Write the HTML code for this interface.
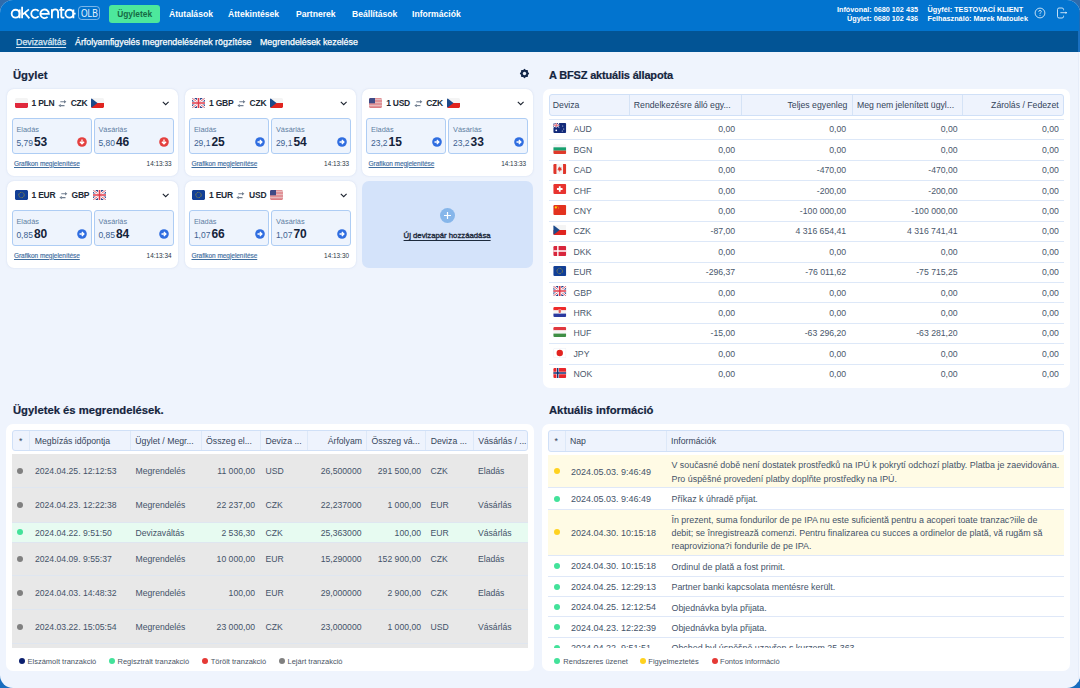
<!DOCTYPE html>
<html><head><meta charset="utf-8">
<style>
*{box-sizing:border-box;margin:0;padding:0}
html,body{width:1080px;height:688px;overflow:hidden;background:linear-gradient(#2f6bab,#1a6ebf 30%,#1a6ebf);font-family:"Liberation Sans",sans-serif;color:#1c2b3f}
#app{position:absolute;left:0;top:0;width:1080px;height:688px;border-radius:13px;overflow:hidden;background:#eff4fd}
.abs{position:absolute}
#top{position:absolute;left:0;top:0;width:1080px;height:31px;background:#0274cf}
#sub{position:absolute;left:0;top:31px;width:1080px;height:21px;background:#025495}
.logo{position:absolute;left:10.5px;top:3.9px;font-size:17px;color:#fff;letter-spacing:.5px;line-height:20px}
.olb{position:absolute;left:78px;top:6.3px;width:22px;height:14px;border:1px solid rgba(220,235,255,.55);border-radius:3.5px}.olb span{position:absolute;left:1.6px;top:0px;font-size:10.6px;color:#eaf3fc;line-height:12px;transform:scaleX(.8);transform-origin:0 0;white-space:nowrap}
.nav{position:absolute;top:9px;font-size:8.6px;font-weight:bold;color:#fff;white-space:nowrap}
.pill{position:absolute;left:109.2px;top:5.2px;width:50.8px;height:17.5px;background:#4de89c;border-radius:3px;color:#166a44;font-size:8.4px;font-weight:bold;text-align:center;line-height:19px}
.hinfo{position:absolute;font-size:7.25px;font-weight:bold;color:#fff;white-space:nowrap;line-height:9.2px}
.subnav{position:absolute;top:36.8px;font-size:8.85px;color:#fff;white-space:nowrap;-webkit-text-stroke:.25px #fff}.subnav u{color:#dfe8f3;-webkit-text-stroke:.25px #dfe8f3;text-decoration-thickness:.6px;text-underline-offset:1.5px}
.title{position:absolute;font-size:11.25px;font-weight:bold;color:#15253e;white-space:nowrap;-webkit-text-stroke:.2px #15253e}
.card{position:absolute;width:171px;height:86.5px;background:#fff;border-radius:7px;box-shadow:0 0 2px rgba(150,170,210,.35)}
svg.flag{position:absolute}
.chd{position:absolute;left:24.6px;top:8.6px;height:11px;font-size:8.5px;font-weight:bold;white-space:nowrap;color:#222a36;line-height:11px;letter-spacing:-.25px}
.chd .swi{display:inline-block;vertical-align:top;margin:2.4px 3.6px 0 3.6px}
.chd .c2{margin-right:4px}.chd .fl2{display:inline-block;vertical-align:top;width:13px;height:10px;margin-top:-.1px;border-radius:1px}
.swap{position:absolute}
.chev{position:absolute;right:8.5px;top:12.2px}
.rb{position:absolute;top:29px;width:80px;height:36px;background:#eef4fd;border:1px solid #aecdf4;border-radius:3px}
.rb .lb{position:absolute;left:3.5px;top:6px;font-size:7.4px;color:#5e7fa3}
.rb .v{position:absolute;left:3.5px;top:16px;white-space:nowrap;color:#14233a;line-height:12px}
.rb .s{font-size:8.5px;color:#3d6190}
.rb .b{font-size:12px;font-weight:bold;margin-left:1px}
.rb .ic{position:absolute;right:3.6px;top:18px}
.gl{position:absolute;left:7px;top:70.6px;font-size:6.5px;color:#3f6e9f;text-decoration:underline;text-decoration-thickness:.5px;text-underline-offset:.7px;white-space:nowrap;-webkit-text-stroke:.15px #3f6e9f;letter-spacing:-.05px}
.ts{position:absolute;right:6.5px;top:71px;font-size:6.4px;color:#2a3646;white-space:nowrap}
.addc{background:#d4e3fa;box-shadow:none}
.addt{position:absolute;left:0;width:171px;top:49.7px;text-align:center;font-size:7.75px;font-weight:normal;-webkit-text-stroke:.35px #1d2a3c;color:#1d2a3c;text-decoration:underline;text-underline-offset:2px;text-decoration-thickness:.8px}
.panel{position:absolute;background:#fff;border-radius:7px}
.th{position:absolute;background:#eef3fd;border:1px solid #d0e0f7;border-radius:3px}
.thc{position:absolute;top:0;height:100%;font-size:8.7px;color:#34445a;white-space:nowrap;padding:0 4.3px;line-height:21px}
.thc.r{text-align:right}
.thc.c{text-align:center}
.br{position:absolute;left:6px;width:515.5px;height:20.4px;border-top:1px solid #dde8f8}
.bc{position:absolute;top:4.7px;font-size:8.7px;color:#4a586c;white-space:nowrap}
.txbody,.ibody{position:absolute;overflow:hidden}.txbody{background:#e8e8e8}
.txr{position:absolute;left:0;width:100%;background:#e8e8e8;border-bottom:1px solid #dfe6f0}
.txr.green{background:#e7fbf1}
.dot{position:absolute;width:6px;height:6px;border-radius:50%}
.tc{position:absolute;font-size:8.65px;color:#445369;white-space:nowrap}
.ir{position:absolute;left:0;width:100%;background:#fff;border-bottom:1px solid #dfe8f8}
.ir.yel{background:#fffbe5}
.tc.itd{font-size:9px}.itx{position:absolute;font-size:8.9px;color:#445369;white-space:nowrap;line-height:13.4px}
.ldot{position:absolute;width:6px;height:6px;border-radius:50%}
.lt{position:absolute;font-size:7.5px;color:#4a5566;white-space:nowrap;line-height:10px}

</style></head><body>
<svg width="0" height="0" style="position:absolute"><defs>
<clipPath id="fc"><rect width="13" height="10" rx="1.3"/></clipPath>
<symbol id="f-cz" viewBox="0 0 13 10"><g clip-path="url(#fc)"><rect width="13" height="5" fill="#f4f4f4"/><rect y="5" width="13" height="5" fill="#e0241f"/><path d="M0 0L6.5 5L0 10Z" fill="#1c4a8a"/></g></symbol>
<symbol id="f-pl" viewBox="0 0 13 10"><g clip-path="url(#fc)"><rect width="13" height="5" fill="#f4f4f4"/><rect y="5" width="13" height="5" fill="#e0283c"/></g></symbol>
<symbol id="f-gb" viewBox="0 0 13 10"><g clip-path="url(#fc)"><rect width="13" height="10" fill="#1f3a85"/><path d="M0 0L13 10M13 0L0 10" stroke="#fff" stroke-width="2.6"/><path d="M0 0L13 10M13 0L0 10" stroke="#e03a4a" stroke-width=".8"/><path d="M6.5 0V10M0 5H13" stroke="#fff" stroke-width="3.2"/><path d="M6.5 0V10M0 5H13" stroke="#e03a4a" stroke-width="1.7"/></g></symbol>
<symbol id="f-us" viewBox="0 0 13 10"><g clip-path="url(#fc)"><rect width="13" height="10" fill="#f3f3f3"/><path d="M0 .75H13M0 2.25H13M0 3.75H13M0 5.25H13M0 6.75H13M0 8.25H13M0 9.6H13" stroke="#d0454f" stroke-width=".75"/><rect width="6" height="5.3" fill="#3f4a86"/></g></symbol>
<symbol id="f-eu" viewBox="0 0 13 10"><g clip-path="url(#fc)"><rect width="13" height="10" fill="#123f96"/><circle cx="6.5" cy="5" r="2.7" fill="none" stroke="#e8c200" stroke-width=".7" stroke-dasharray=".7 .7"/></g></symbol>
<symbol id="f-au" viewBox="0 0 13 10"><g clip-path="url(#fc)"><rect width="13" height="10" fill="#132a7a"/><path d="M0 0L6 4.5M6 0L0 4.5" stroke="#fff" stroke-width="1"/><path d="M3 0V4.5M0 2.25H6" stroke="#fff" stroke-width="1.4"/><path d="M3 0V4.5M0 2.25H6" stroke="#e03a4a" stroke-width=".7"/><circle cx="3" cy="7.3" r=".9" fill="#fff"/><circle cx="9.5" cy="3" r=".5" fill="#fff"/><circle cx="10.5" cy="6" r=".5" fill="#fff"/><circle cx="9" cy="8" r=".5" fill="#fff"/></g></symbol>
<symbol id="f-bg" viewBox="0 0 13 10"><g clip-path="url(#fc)"><rect width="13" height="3.4" fill="#f4f4f4"/><rect y="3.3" width="13" height="3.4" fill="#17a06e"/><rect y="6.6" width="13" height="3.4" fill="#e03a2a"/></g></symbol>
<symbol id="f-ca" viewBox="0 0 13 10"><g clip-path="url(#fc)"><rect width="13" height="10" fill="#f4f4f4"/><rect width="3.2" height="10" fill="#e0352a"/><rect x="9.8" width="3.2" height="10" fill="#e0352a"/><path d="M6.5 2.2L7.2 3.8L8.3 3.4L7.9 5.4L8.8 5.2L8.4 6.3L6.8 6.6V7.8H6.2V6.6L4.6 6.3L4.2 5.2L5.1 5.4L4.7 3.4L5.8 3.8Z" fill="#e0352a"/></g></symbol>
<symbol id="f-ch" viewBox="0 0 13 10"><g clip-path="url(#fc)"><rect width="13" height="10" fill="#e8332f"/><path d="M5.6 2.2H7.4V4.1H9.3V5.9H7.4V7.8H5.6V5.9H3.7V4.1H5.6Z" fill="#fff"/></g></symbol>
<symbol id="f-cn" viewBox="0 0 13 10"><g clip-path="url(#fc)"><rect width="13" height="10" fill="#e3321f"/><circle cx="2.6" cy="2.4" r="1.1" fill="#ffde00"/><circle cx="4.6" cy="1.2" r=".35" fill="#ffde00"/><circle cx="5.3" cy="2.3" r=".35" fill="#ffde00"/><circle cx="5.2" cy="3.6" r=".35" fill="#ffde00"/></g></symbol>
<symbol id="f-dk" viewBox="0 0 13 10"><g clip-path="url(#fc)"><rect width="13" height="10" fill="#d8263c"/><path d="M4.6 0V10M0 5H13" stroke="#fff" stroke-width="1.4"/></g></symbol>
<symbol id="f-hr" viewBox="0 0 13 10"><g clip-path="url(#fc)"><rect width="13" height="3.4" fill="#ee2a2a"/><rect y="3.3" width="13" height="3.4" fill="#f4f4f4"/><rect y="6.6" width="13" height="3.4" fill="#2a3aa0"/><path d="M5.2 2.6H7.8V5.6Q6.5 7 5.2 5.6Z" fill="#e25a5a" stroke="#fff" stroke-width=".3"/></g></symbol>
<symbol id="f-hu" viewBox="0 0 13 10"><g clip-path="url(#fc)"><rect width="13" height="3.4" fill="#e0383f"/><rect y="3.3" width="13" height="3.4" fill="#f6f6f6"/><rect y="6.6" width="13" height="3.4" fill="#3f8f45"/></g></symbol>
<symbol id="f-jp" viewBox="0 0 13 10"><rect x=".25" y=".25" width="12.5" height="9.5" rx="1.2" fill="#fff" stroke="#e3e8f0" stroke-width=".5"/><circle cx="6.5" cy="5" r="3.2" fill="#e2231f"/></symbol>
<symbol id="f-no" viewBox="0 0 13 10"><g clip-path="url(#fc)"><rect width="13" height="10" fill="#e8262b"/><path d="M4.5 0V10M0 5H13" stroke="#fff" stroke-width="2.6"/><path d="M4.5 0V10M0 5H13" stroke="#102f72" stroke-width="1.4"/></g></symbol>
</defs></svg>
<div id="app">

 <div id="top">
  <svg class="abs" style="left:0;top:0" width="80" height="24" viewBox="0 0 80 24"><g fill="none" stroke="#fff" stroke-width="1.8" stroke-linecap="butt">
<circle cx="15.6" cy="13.7" r="3.95"/><path d="M19.6 9.4V18.3"/>
<path d="M22.1 6.8V18.3M28.9 9.4L22.4 14.6M24.6 12.9L29.4 18.3"/>
<path d="M38.6 11.2A4.1 4.1 0 1 0 38.6 16.2"/>
<path d="M40.6 13.9H48.9A4.3 4.3 0 1 0 47.6 16.9"/>
<path d="M51.9 9.3V18.3M51.9 12.6Q52.4 9.4 55.2 9.4Q58.1 9.4 58.1 12.6V18.3"/>
<path d="M61.3 6.9V16.2Q61.3 17.6 63.2 17.6H64.3M59.3 9.9H64.4"/>
<circle cx="69.4" cy="13.7" r="3.95"/><path d="M73.4 9.4V18.3M73.2 13.6H75.6"/>
</g></svg>
  <div class="olb"><span>OLB</span></div>
  <div class="pill">Ügyletek</div>
  <div class="nav" style="left:169px">Átutalások</div>
  <div class="nav" style="left:228px">Áttekintések</div>
  <div class="nav" style="left:296px">Partnerek</div>
  <div class="nav" style="left:352px">Beállítások</div>
  <div class="nav" style="left:412px">Információk</div>
  <div class="hinfo" style="right:162px;top:4.6px;text-align:right">Infóvonal: 0680 102 435<br>Ügylet: 0680 102 436</div>
  <div class="hinfo" style="left:927.6px;top:4.6px">Ügyfél: TESTOVACÍ KLIENT<br>Felhasználó: Marek Matoulek</div>
  <svg class="abs" style="left:1034px;top:6.5px" width="12" height="12" viewBox="0 0 12 12"><circle cx="6" cy="6" r="4.9" fill="none" stroke="#fff" stroke-opacity=".85" stroke-width=".9"/><path d="M4.7 4.8Q4.7 3.4 6 3.4Q7.3 3.4 7.3 4.6Q7.3 5.3 6.5 5.8Q6 6.1 6 6.9" fill="none" stroke="#fff" stroke-opacity=".85" stroke-width=".85"/><circle cx="6" cy="8.3" r=".5" fill="#fff"/></svg>
  <svg class="abs" style="left:1056px;top:6.5px" width="12" height="12" viewBox="0 0 12 12"><path d="M7.6 3.3V2.6Q7.6 1 6 1H3Q1.5 1 1.5 2.6V9.4Q1.5 11 3 11H6Q7.6 11 7.6 9.4V8.7" fill="none" stroke="#fff" stroke-opacity=".85" stroke-width=".9"/><path d="M4.4 5.7H10" stroke="#fff" stroke-opacity=".85" stroke-width=".9"/><path d="M9.6 4.4L11.2 5.7L9.6 7Z" fill="#fff"/></svg>
 </div>
 <div id="sub"></div>
 <div class="subnav" style="left:16px"><u>Devizaváltás</u></div>
 <div class="subnav" style="left:75px">Árfolyamfigyelés megrendelésének rögzítése</div>
 <div class="subnav" style="left:260px">Megrendelések kezelése</div>


 <div class="title" style="left:13px;top:68.8px">Ügylet</div>
 <svg class="abs" style="left:518.8px;top:67.9px" width="11" height="11" viewBox="0 0 10 10"><rect x="1.9" y="1.9" width="6.2" height="6.2" rx=".5" fill="#14284a"/><rect x="1.9" y="1.9" width="6.2" height="6.2" rx=".5" fill="#14284a" transform="rotate(45 5 5)"/><circle cx="5" cy="5" r="1.55" fill="#eef3fc"/></svg>
 <div class="title" style="left:549px;top:69.1px;font-size:11px;letter-spacing:-.17px">A BFSZ aktuális állapota</div>
 <div class="title" style="left:13px;top:404.3px">Ügyletek és megrendelések.</div>
 <div class="title" style="left:549px;top:404.3px">Aktuális információ</div>

<div class="card" style="left:7px;top:89px"><svg class="flag" style="left:7.6px;top:8.8px;width:13px;height:10px;border-radius:1px" viewBox="0 0 13 10"><use href="#f-pl"/></svg><div class="chd"><span class="c1">1 PLN</span><svg class="swi" width="9" height="7.5" viewBox="0 0 9 7.5"><path d="M2.3 1.8H6.3" stroke="#6f7d8f" stroke-width="1.1"/><path d="M6 .1L8.4 1.8L6 3.5Z" fill="#6f7d8f"/><path d="M6.5 5.6H2.6" stroke="#6f7d8f" stroke-width="1.1"/><path d="M2.8 3.9L.3 5.6L2.8 7.3Z" fill="#6f7d8f"/></svg><span class="c2">CZK</span><svg class="fl2" viewBox="0 0 13 10"><use href="#f-cz"/></svg></div><svg class="chev" width="7.4" height="4.6" viewBox="0 0 7.4 4.6"><path d="M.8 .9L3.7 3.6L6.6 .9" fill="none" stroke="#1d2430" stroke-width="1.15"/></svg><div class="rb" style="left:4.9px"><div class="lb">Eladás</div><div class="v"><span class="s">5,79</span><span class="b">53</span></div><svg class="ic" width="10" height="10" viewBox="0 0 10 10"><circle cx="5" cy="5" r="4.8" fill="#e4403f"/><path d="M5 2.5V6.8M2.9 4.8L5 6.9L7.1 4.8" fill="none" stroke="#fff" stroke-width="1.3"/></svg></div><div class="rb" style="left:86.9px"><div class="lb">Vásárlás</div><div class="v"><span class="s">5,80</span><span class="b">46</span></div><svg class="ic" width="10" height="10" viewBox="0 0 10 10"><circle cx="5" cy="5" r="4.8" fill="#e4403f"/><path d="M5 2.5V6.8M2.9 4.8L5 6.9L7.1 4.8" fill="none" stroke="#fff" stroke-width="1.3"/></svg></div><div class="gl">Grafikon megjelenítése</div><div class="ts">14:13:33</div></div><div class="card" style="left:184.5px;top:89px"><svg class="flag" style="left:7.6px;top:8.8px;width:13px;height:10px;border-radius:1px" viewBox="0 0 13 10"><use href="#f-gb"/></svg><div class="chd"><span class="c1">1 GBP</span><svg class="swi" width="9" height="7.5" viewBox="0 0 9 7.5"><path d="M2.3 1.8H6.3" stroke="#6f7d8f" stroke-width="1.1"/><path d="M6 .1L8.4 1.8L6 3.5Z" fill="#6f7d8f"/><path d="M6.5 5.6H2.6" stroke="#6f7d8f" stroke-width="1.1"/><path d="M2.8 3.9L.3 5.6L2.8 7.3Z" fill="#6f7d8f"/></svg><span class="c2">CZK</span><svg class="fl2" viewBox="0 0 13 10"><use href="#f-cz"/></svg></div><svg class="chev" width="7.4" height="4.6" viewBox="0 0 7.4 4.6"><path d="M.8 .9L3.7 3.6L6.6 .9" fill="none" stroke="#1d2430" stroke-width="1.15"/></svg><div class="rb" style="left:4.9px"><div class="lb">Eladás</div><div class="v"><span class="s">29,1</span><span class="b">25</span></div><svg class="ic" width="10" height="10" viewBox="0 0 10 10"><circle cx="5" cy="5" r="4.8" fill="#2f6de0"/><path d="M2.5 5H6.8M4.8 2.9L6.9 5L4.8 7.1" fill="none" stroke="#fff" stroke-width="1.3"/></svg></div><div class="rb" style="left:86.9px"><div class="lb">Vásárlás</div><div class="v"><span class="s">29,1</span><span class="b">54</span></div><svg class="ic" width="10" height="10" viewBox="0 0 10 10"><circle cx="5" cy="5" r="4.8" fill="#2f6de0"/><path d="M2.5 5H6.8M4.8 2.9L6.9 5L4.8 7.1" fill="none" stroke="#fff" stroke-width="1.3"/></svg></div><div class="gl">Grafikon megjelenítése</div><div class="ts">14:13:33</div></div><div class="card" style="left:361.6px;top:89px"><svg class="flag" style="left:7.6px;top:8.8px;width:13px;height:10px;border-radius:1px" viewBox="0 0 13 10"><use href="#f-us"/></svg><div class="chd"><span class="c1">1 USD</span><svg class="swi" width="9" height="7.5" viewBox="0 0 9 7.5"><path d="M2.3 1.8H6.3" stroke="#6f7d8f" stroke-width="1.1"/><path d="M6 .1L8.4 1.8L6 3.5Z" fill="#6f7d8f"/><path d="M6.5 5.6H2.6" stroke="#6f7d8f" stroke-width="1.1"/><path d="M2.8 3.9L.3 5.6L2.8 7.3Z" fill="#6f7d8f"/></svg><span class="c2">CZK</span><svg class="fl2" viewBox="0 0 13 10"><use href="#f-cz"/></svg></div><svg class="chev" width="7.4" height="4.6" viewBox="0 0 7.4 4.6"><path d="M.8 .9L3.7 3.6L6.6 .9" fill="none" stroke="#1d2430" stroke-width="1.15"/></svg><div class="rb" style="left:4.9px"><div class="lb">Eladás</div><div class="v"><span class="s">23,2</span><span class="b">15</span></div><svg class="ic" width="10" height="10" viewBox="0 0 10 10"><circle cx="5" cy="5" r="4.8" fill="#2f6de0"/><path d="M2.5 5H6.8M4.8 2.9L6.9 5L4.8 7.1" fill="none" stroke="#fff" stroke-width="1.3"/></svg></div><div class="rb" style="left:86.9px"><div class="lb">Vásárlás</div><div class="v"><span class="s">23,2</span><span class="b">33</span></div><svg class="ic" width="10" height="10" viewBox="0 0 10 10"><circle cx="5" cy="5" r="4.8" fill="#2f6de0"/><path d="M2.5 5H6.8M4.8 2.9L6.9 5L4.8 7.1" fill="none" stroke="#fff" stroke-width="1.3"/></svg></div><div class="gl">Grafikon megjelenítése</div><div class="ts">14:13:33</div></div><div class="card" style="left:7px;top:181.2px"><svg class="flag" style="left:7.6px;top:8.8px;width:13px;height:10px;border-radius:1px" viewBox="0 0 13 10"><use href="#f-eu"/></svg><div class="chd"><span class="c1">1 EUR</span><svg class="swi" width="9" height="7.5" viewBox="0 0 9 7.5"><path d="M2.3 1.8H6.3" stroke="#6f7d8f" stroke-width="1.1"/><path d="M6 .1L8.4 1.8L6 3.5Z" fill="#6f7d8f"/><path d="M6.5 5.6H2.6" stroke="#6f7d8f" stroke-width="1.1"/><path d="M2.8 3.9L.3 5.6L2.8 7.3Z" fill="#6f7d8f"/></svg><span class="c2">GBP</span><svg class="fl2" viewBox="0 0 13 10"><use href="#f-gb"/></svg></div><svg class="chev" width="7.4" height="4.6" viewBox="0 0 7.4 4.6"><path d="M.8 .9L3.7 3.6L6.6 .9" fill="none" stroke="#1d2430" stroke-width="1.15"/></svg><div class="rb" style="left:4.9px"><div class="lb">Eladás</div><div class="v"><span class="s">0,85</span><span class="b">80</span></div><svg class="ic" width="10" height="10" viewBox="0 0 10 10"><circle cx="5" cy="5" r="4.8" fill="#2f6de0"/><path d="M2.5 5H6.8M4.8 2.9L6.9 5L4.8 7.1" fill="none" stroke="#fff" stroke-width="1.3"/></svg></div><div class="rb" style="left:86.9px"><div class="lb">Vásárlás</div><div class="v"><span class="s">0,85</span><span class="b">84</span></div><svg class="ic" width="10" height="10" viewBox="0 0 10 10"><circle cx="5" cy="5" r="4.8" fill="#2f6de0"/><path d="M2.5 5H6.8M4.8 2.9L6.9 5L4.8 7.1" fill="none" stroke="#fff" stroke-width="1.3"/></svg></div><div class="gl">Grafikon megjelenítése</div><div class="ts">14:13:34</div></div><div class="card" style="left:184.5px;top:181.2px"><svg class="flag" style="left:7.6px;top:8.8px;width:13px;height:10px;border-radius:1px" viewBox="0 0 13 10"><use href="#f-eu"/></svg><div class="chd"><span class="c1">1 EUR</span><svg class="swi" width="9" height="7.5" viewBox="0 0 9 7.5"><path d="M2.3 1.8H6.3" stroke="#6f7d8f" stroke-width="1.1"/><path d="M6 .1L8.4 1.8L6 3.5Z" fill="#6f7d8f"/><path d="M6.5 5.6H2.6" stroke="#6f7d8f" stroke-width="1.1"/><path d="M2.8 3.9L.3 5.6L2.8 7.3Z" fill="#6f7d8f"/></svg><span class="c2">USD</span><svg class="fl2" viewBox="0 0 13 10"><use href="#f-us"/></svg></div><svg class="chev" width="7.4" height="4.6" viewBox="0 0 7.4 4.6"><path d="M.8 .9L3.7 3.6L6.6 .9" fill="none" stroke="#1d2430" stroke-width="1.15"/></svg><div class="rb" style="left:4.9px"><div class="lb">Eladás</div><div class="v"><span class="s">1,07</span><span class="b">66</span></div><svg class="ic" width="10" height="10" viewBox="0 0 10 10"><circle cx="5" cy="5" r="4.8" fill="#2f6de0"/><path d="M2.5 5H6.8M4.8 2.9L6.9 5L4.8 7.1" fill="none" stroke="#fff" stroke-width="1.3"/></svg></div><div class="rb" style="left:86.9px"><div class="lb">Vásárlás</div><div class="v"><span class="s">1,07</span><span class="b">70</span></div><svg class="ic" width="10" height="10" viewBox="0 0 10 10"><circle cx="5" cy="5" r="4.8" fill="#2f6de0"/><path d="M2.5 5H6.8M4.8 2.9L6.9 5L4.8 7.1" fill="none" stroke="#fff" stroke-width="1.3"/></svg></div><div class="gl">Grafikon megjelenítése</div><div class="ts">14:13:30</div></div>
<div class="card addc" style="left:361.6px;top:181.2px;height:86.8px"><svg class="abs" style="left:78.5px;top:26.4px" width="15" height="15" viewBox="0 0 15 15"><circle cx="7.5" cy="7.5" r="7.5" fill="#86b6ea"/><path d="M7.5 4V11M4 7.5H11" stroke="#fff" stroke-width="1.2"/></svg><div class="addt">Új devizapár hozzáadása</div></div>
<div class="panel" style="left:542.5px;top:88.5px;width:527.5px;height:299.5px"><div class="th" style="left:6px;top:5.5px;width:515.5px;height:22px"><div class="thc l" style="left:-1px;width:80px;">Deviza</div><div class="thc l" style="left:79px;width:112.1px;border-left:1px solid #d5e3f6;">Rendelkezésre álló egy...</div><div class="thc r" style="left:191.1px;width:111.1px;border-left:1px solid #d5e3f6;">Teljes egyenleg</div><div class="thc l" style="left:302.2px;width:110.7px;border-left:1px solid #d5e3f6;">Meg nem jelenített ügyl...</div><div class="thc r" style="left:412.9px;width:100.6px;border-left:1px solid #d5e3f6;">Zárolás / Fedezet</div></div><div class="br" style="top:30.2px"><svg class="flag" style="left:4.9px;top:3.5px;width:13.5px;height:10px" viewBox="0 0 13 10"><use href="#f-au"/></svg><div class="bc" style="left:25px">AUD</div><div class="bc r" style="right:328.8px">0,00</div><div class="bc r" style="right:217.8px">0,00</div><div class="bc r" style="right:106.3px">0,00</div><div class="bc r" style="right:5.2px">0,00</div></div><div class="br" style="top:50.6px"><svg class="flag" style="left:4.9px;top:3.5px;width:13.5px;height:10px" viewBox="0 0 13 10"><use href="#f-bg"/></svg><div class="bc" style="left:25px">BGN</div><div class="bc r" style="right:328.8px">0,00</div><div class="bc r" style="right:217.8px">0,00</div><div class="bc r" style="right:106.3px">0,00</div><div class="bc r" style="right:5.2px">0,00</div></div><div class="br" style="top:71.0px"><svg class="flag" style="left:4.9px;top:3.5px;width:13.5px;height:10px" viewBox="0 0 13 10"><use href="#f-ca"/></svg><div class="bc" style="left:25px">CAD</div><div class="bc r" style="right:328.8px">0,00</div><div class="bc r" style="right:217.8px">-470,00</div><div class="bc r" style="right:106.3px">-470,00</div><div class="bc r" style="right:5.2px">0,00</div></div><div class="br" style="top:91.4px"><svg class="flag" style="left:4.9px;top:3.5px;width:13.5px;height:10px" viewBox="0 0 13 10"><use href="#f-ch"/></svg><div class="bc" style="left:25px">CHF</div><div class="bc r" style="right:328.8px">0,00</div><div class="bc r" style="right:217.8px">-200,00</div><div class="bc r" style="right:106.3px">-200,00</div><div class="bc r" style="right:5.2px">0,00</div></div><div class="br" style="top:111.8px"><svg class="flag" style="left:4.9px;top:3.5px;width:13.5px;height:10px" viewBox="0 0 13 10"><use href="#f-cn"/></svg><div class="bc" style="left:25px">CNY</div><div class="bc r" style="right:328.8px">0,00</div><div class="bc r" style="right:217.8px">-100 000,00</div><div class="bc r" style="right:106.3px">-100 000,00</div><div class="bc r" style="right:5.2px">0,00</div></div><div class="br" style="top:132.2px"><svg class="flag" style="left:4.9px;top:3.5px;width:13.5px;height:10px" viewBox="0 0 13 10"><use href="#f-cz"/></svg><div class="bc" style="left:25px">CZK</div><div class="bc r" style="right:328.8px">-87,00</div><div class="bc r" style="right:217.8px">4 316 654,41</div><div class="bc r" style="right:106.3px">4 316 741,41</div><div class="bc r" style="right:5.2px">0,00</div></div><div class="br" style="top:152.6px"><svg class="flag" style="left:4.9px;top:3.5px;width:13.5px;height:10px" viewBox="0 0 13 10"><use href="#f-dk"/></svg><div class="bc" style="left:25px">DKK</div><div class="bc r" style="right:328.8px">0,00</div><div class="bc r" style="right:217.8px">0,00</div><div class="bc r" style="right:106.3px">0,00</div><div class="bc r" style="right:5.2px">0,00</div></div><div class="br" style="top:173.0px"><svg class="flag" style="left:4.9px;top:3.5px;width:13.5px;height:10px" viewBox="0 0 13 10"><use href="#f-eu"/></svg><div class="bc" style="left:25px">EUR</div><div class="bc r" style="right:328.8px">-296,37</div><div class="bc r" style="right:217.8px">-76 011,62</div><div class="bc r" style="right:106.3px">-75 715,25</div><div class="bc r" style="right:5.2px">0,00</div></div><div class="br" style="top:193.4px"><svg class="flag" style="left:4.9px;top:3.5px;width:13.5px;height:10px" viewBox="0 0 13 10"><use href="#f-gb"/></svg><div class="bc" style="left:25px">GBP</div><div class="bc r" style="right:328.8px">0,00</div><div class="bc r" style="right:217.8px">0,00</div><div class="bc r" style="right:106.3px">0,00</div><div class="bc r" style="right:5.2px">0,00</div></div><div class="br" style="top:213.8px"><svg class="flag" style="left:4.9px;top:3.5px;width:13.5px;height:10px" viewBox="0 0 13 10"><use href="#f-hr"/></svg><div class="bc" style="left:25px">HRK</div><div class="bc r" style="right:328.8px">0,00</div><div class="bc r" style="right:217.8px">0,00</div><div class="bc r" style="right:106.3px">0,00</div><div class="bc r" style="right:5.2px">0,00</div></div><div class="br" style="top:234.2px"><svg class="flag" style="left:4.9px;top:3.5px;width:13.5px;height:10px" viewBox="0 0 13 10"><use href="#f-hu"/></svg><div class="bc" style="left:25px">HUF</div><div class="bc r" style="right:328.8px">-15,00</div><div class="bc r" style="right:217.8px">-63 296,20</div><div class="bc r" style="right:106.3px">-63 281,20</div><div class="bc r" style="right:5.2px">0,00</div></div><div class="br" style="top:254.6px"><svg class="flag" style="left:4.9px;top:3.5px;width:13.5px;height:10px" viewBox="0 0 13 10"><use href="#f-jp"/></svg><div class="bc" style="left:25px">JPY</div><div class="bc r" style="right:328.8px">0,00</div><div class="bc r" style="right:217.8px">0,00</div><div class="bc r" style="right:106.3px">0,00</div><div class="bc r" style="right:5.2px">0,00</div></div><div class="br" style="top:275.0px"><svg class="flag" style="left:4.9px;top:3.5px;width:13.5px;height:10px" viewBox="0 0 13 10"><use href="#f-no"/></svg><div class="bc" style="left:25px">NOK</div><div class="bc r" style="right:328.8px">0,00</div><div class="bc r" style="right:217.8px">0,00</div><div class="bc r" style="right:106.3px">0,00</div><div class="bc r" style="right:5.2px">0,00</div></div></div>
<div class="panel" style="left:6.3px;top:424.3px;width:527.7px;height:246.5px"><div class="th" style="left:6.2px;top:5.7px;width:515.5px;height:21.5px"><div class="thc c" style="left:-1.5px;width:17.5px;">*</div><div class="thc l" style="left:16.0px;width:100.5px;border-left:1px solid #dde8f8;">Megbízás időpontja</div><div class="thc l" style="left:116.5px;width:70.8px;border-left:1px solid #dde8f8;">Ügylet / Megr...</div><div class="thc l" style="left:187.3px;width:59.4px;border-left:1px solid #dde8f8;">Összeg el...</div><div class="thc l" style="left:246.7px;width:47.0px;border-left:1px solid #dde8f8;">Deviza ...</div><div class="thc r" style="left:293.7px;width:59.1px;border-left:1px solid #dde8f8;">Árfolyam</div><div class="thc l" style="left:352.8px;width:59.1px;border-left:1px solid #dde8f8;">Összeg vá...</div><div class="thc l" style="left:411.9px;width:47.5px;border-left:1px solid #dde8f8;">Deviza ...</div><div class="thc l" style="left:459.4px;width:56.1px;border-left:1px solid #dde8f8;">Vásárlás / ...</div></div><div class="txbody" style="left:6.2px;top:30px;width:515.5px;height:194px"><div class="txr" style="top:0.0px;height:34px"><div class="dot" style="left:5px;top:13.7px;background:#808080"></div><div class="tc" style="left:22.5px;top:12.0px">2024.04.25. 12:12:53</div><div class="tc" style="left:123.0px;top:12.0px">Megrendelés</div><div class="tc" style="right:273.0px;top:12.0px">11 000,00</div><div class="tc" style="left:253.0px;top:12.0px">USD</div><div class="tc" style="right:166.5px;top:12.0px">26,500000</div><div class="tc" style="right:107.0px;top:12.0px">291 500,00</div><div class="tc" style="left:418.0px;top:12.0px">CZK</div><div class="tc" style="left:465.5px;top:12.0px">Eladás</div></div><div class="txr" style="top:34.0px;height:34.5px"><div class="dot" style="left:5px;top:13.9px;background:#808080"></div><div class="tc" style="left:22.5px;top:12.2px">2024.04.23. 12:22:38</div><div class="tc" style="left:123.0px;top:12.2px">Megrendelés</div><div class="tc" style="right:273.0px;top:12.2px">22 237,00</div><div class="tc" style="left:253.0px;top:12.2px">CZK</div><div class="tc" style="right:166.5px;top:12.2px">22,237000</div><div class="tc" style="right:107.0px;top:12.2px">1 000,00</div><div class="tc" style="left:418.0px;top:12.2px">EUR</div><div class="tc" style="left:465.5px;top:12.2px">Vásárlás</div></div><div class="txr green" style="top:68.5px;height:20px"><div class="dot" style="left:5px;top:6.7px;background:#43e29a"></div><div class="tc" style="left:22.5px;top:5.0px">2024.04.22. 9:51:50</div><div class="tc" style="left:123.0px;top:5.0px">Devizaváltás</div><div class="tc" style="right:273.0px;top:5.0px">2 536,30</div><div class="tc" style="left:253.0px;top:5.0px">CZK</div><div class="tc" style="right:166.5px;top:5.0px">25,363000</div><div class="tc" style="right:107.0px;top:5.0px">100,00</div><div class="tc" style="left:418.0px;top:5.0px">EUR</div><div class="tc" style="left:465.5px;top:5.0px">Vásárlás</div></div><div class="txr" style="top:88.5px;height:33px"><div class="dot" style="left:5px;top:13.2px;background:#808080"></div><div class="tc" style="left:22.5px;top:11.5px">2024.04.09. 9:55:37</div><div class="tc" style="left:123.0px;top:11.5px">Megrendelés</div><div class="tc" style="right:273.0px;top:11.5px">10 000,00</div><div class="tc" style="left:253.0px;top:11.5px">EUR</div><div class="tc" style="right:166.5px;top:11.5px">15,290000</div><div class="tc" style="right:107.0px;top:11.5px">152 900,00</div><div class="tc" style="left:418.0px;top:11.5px">CZK</div><div class="tc" style="left:465.5px;top:11.5px">Eladás</div></div><div class="txr" style="top:121.5px;height:34.5px"><div class="dot" style="left:5px;top:13.9px;background:#808080"></div><div class="tc" style="left:22.5px;top:12.2px">2024.04.03. 14:48:32</div><div class="tc" style="left:123.0px;top:12.2px">Megrendelés</div><div class="tc" style="right:273.0px;top:12.2px">100,00</div><div class="tc" style="left:253.0px;top:12.2px">EUR</div><div class="tc" style="right:166.5px;top:12.2px">29,000000</div><div class="tc" style="right:107.0px;top:12.2px">2 900,00</div><div class="tc" style="left:418.0px;top:12.2px">CZK</div><div class="tc" style="left:465.5px;top:12.2px">Eladás</div></div><div class="txr" style="top:156.0px;height:33.5px"><div class="dot" style="left:5px;top:13.4px;background:#808080"></div><div class="tc" style="left:22.5px;top:11.8px">2024.03.22. 15:05:54</div><div class="tc" style="left:123.0px;top:11.8px">Megrendelés</div><div class="tc" style="right:273.0px;top:11.8px">23 000,00</div><div class="tc" style="left:253.0px;top:11.8px">CZK</div><div class="tc" style="right:166.5px;top:11.8px">23,000000</div><div class="tc" style="right:107.0px;top:11.8px">1 000,00</div><div class="tc" style="left:418.0px;top:11.8px">USD</div><div class="tc" style="left:465.5px;top:11.8px">Vásárlás</div></div></div><div class="ldot" style="left:12.45px;top:233.45px;background:#0b1f6e"></div><div class="lt" style="left:21.20px;top:232.45px">Elszámolt tranzakció</div><div class="ldot" style="left:102.45px;top:233.45px;background:#43e29a"></div><div class="lt" style="left:111.20px;top:232.45px">Regisztrált tranzakció</div><div class="ldot" style="left:195.70px;top:233.45px;background:#e53935"></div><div class="lt" style="left:204.45px;top:232.45px">Törölt tranzakció</div><div class="ldot" style="left:272.45px;top:233.45px;background:#808080"></div><div class="lt" style="left:281.20px;top:232.45px">Lejárt tranzakció</div></div>
<div class="panel" style="left:542.4px;top:424.2px;width:527.6px;height:246.6px"><div class="th" style="left:5.8px;top:5.8px;width:515.8px;height:21.6px"><div class="thc c" style="left:-1.5px;width:17.0px;">*</div><div class="thc l" style="left:15.5px;width:101.1px;border-left:1px solid #dde8f8;">Nap</div><div class="thc l" style="left:116.6px;width:399.3px;border-left:1px solid #dde8f8;">Információk</div></div><div class="ibody" style="left:5.8px;top:31px;width:515.8px;height:193px"><div class="ir yel" style="top:0.0px;height:33px"><div class="dot" style="left:5.5px;top:13.2px;background:#ffd21f"></div><div class="tc itd" style="left:22.8px;top:11.6px">2024.05.03. 9:46:49</div><div class="itx" style="left:123.3px;top:4.0px">V současné době není dostatek prostředků na IPÚ k pokrytí odchozí platby. Platba je zaevidována.<br>Pro úspěšné provedení platby doplňte prostředky na IPÚ.</div></div><div class="ir" style="top:33.0px;height:21.6px"><div class="dot" style="left:5.5px;top:7.5px;background:#43e29a"></div><div class="tc itd" style="left:22.8px;top:5.9px">2024.05.03. 9:46:49</div><div class="itx" style="left:123.3px;top:5.0px">Příkaz k úhradě přijat.</div></div><div class="ir yel" style="top:54.6px;height:46px"><div class="dot" style="left:5.5px;top:19.7px;background:#ffd21f"></div><div class="tc itd" style="left:22.8px;top:18.1px">2024.04.30. 10:15:18</div><div class="itx" style="left:123.3px;top:3.8px">În prezent, suma fondurilor de pe IPA nu este suficientă pentru a acoperi toate tranzac?iile de<br>debit; se înregistrează comenzi. Pentru finalizarea cu succes a ordinelor de plată, vă rugăm să<br>reaproviziona?i fondurile de pe IPA.</div></div><div class="ir" style="top:100.6px;height:21.1px"><div class="dot" style="left:5.5px;top:7.3px;background:#43e29a"></div><div class="tc itd" style="left:22.8px;top:5.7px">2024.04.30. 10:15:18</div><div class="itx" style="left:123.3px;top:4.8px">Ordinul de plată a fost primit.</div></div><div class="ir" style="top:121.7px;height:20.3px"><div class="dot" style="left:5.5px;top:6.9px;background:#43e29a"></div><div class="tc itd" style="left:22.8px;top:5.2px">2024.04.25. 12:29:13</div><div class="itx" style="left:123.3px;top:4.4px">Partner banki kapcsolata mentésre került.</div></div><div class="ir" style="top:142.0px;height:20.3px"><div class="dot" style="left:5.5px;top:6.9px;background:#43e29a"></div><div class="tc itd" style="left:22.8px;top:5.2px">2024.04.25. 12:12:54</div><div class="itx" style="left:123.3px;top:4.4px">Objednávka byla přijata.</div></div><div class="ir" style="top:162.3px;height:20.3px"><div class="dot" style="left:5.5px;top:6.9px;background:#43e29a"></div><div class="tc itd" style="left:22.8px;top:5.2px">2024.04.23. 12:22:39</div><div class="itx" style="left:123.3px;top:4.4px">Objednávka byla přijata.</div></div><div class="ir" style="top:182.6px;height:20.3px"><div class="dot" style="left:5.5px;top:6.9px;background:#43e29a"></div><div class="tc itd" style="left:22.8px;top:5.2px">2024.04.22. 9:51:51</div><div class="itx" style="left:123.3px;top:4.4px">Obchod byl úspěšně uzavřen s kurzem 25,363</div></div></div><div class="ldot" style="left:11.70px;top:233.55px;background:#43e29a"></div><div class="lt" style="left:20.95px;top:232.55px">Rendszeres üzenet</div><div class="ldot" style="left:97.20px;top:233.55px;background:#ffd21f"></div><div class="lt" style="left:105.95px;top:232.55px">Figyelmeztetés</div><div class="ldot" style="left:169.20px;top:233.55px;background:#e53935"></div><div class="lt" style="left:177.70px;top:232.55px">Fontos információ</div></div>
<div class="abs" style="left:1078.5px;top:10px;width:1.5px;height:21px;background:#1f6cb8"></div><div class="abs" style="left:1078px;top:31px;width:2px;height:21px;background:#1a6fc0"></div><div class="abs" style="left:1077.5px;top:52px;width:2.5px;height:636px;background:#f5f8fe;border-left:.5px solid #e6edf9"></div>
</div>
</body></html>
